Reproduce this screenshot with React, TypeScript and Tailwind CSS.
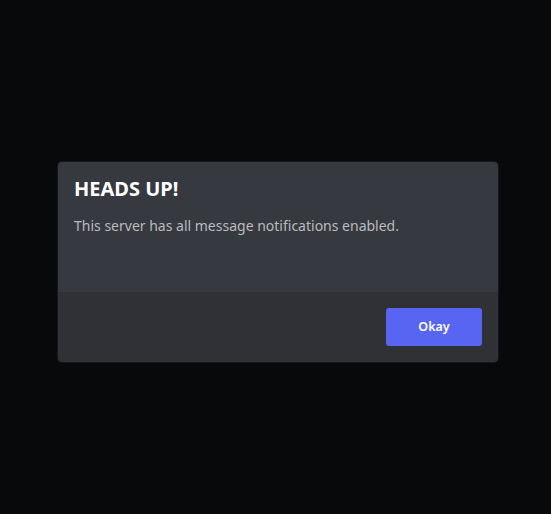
import React from "react";

export default function App() {
  return (
    <div
      className="w-[551px] h-[514px] bg-[#08090b] flex items-start justify-start pl-[58px] pt-[162px]"
      style={{ fontFamily: '"Noto Sans", "Open Sans", sans-serif' }}
    >
      <div className="w-[440px] h-[200px] rounded-[4px] overflow-hidden flex flex-col shadow-[0_0_0_1px_rgba(32,34,37,0.6)]">
        <div className="bg-[#36393f] h-[130px] px-4 pt-[15px]">
          <h2 className="text-white text-[20px] leading-[24px] font-bold">HEADS UP!</h2>
          <p className="text-[#b9bbbe] text-[14px] leading-[18px] mt-[16px]">
            This server has all message notifications enabled.
          </p>
        </div>
        <div className="bg-[#2f3136] h-[70px] p-4 flex justify-end">
          <button className="w-[96px] h-[38px] rounded-[3px] bg-[#5865f2] text-white text-[12.5px] font-semibold">
            Okay
          </button>
        </div>
      </div>
    </div>
  );
}
